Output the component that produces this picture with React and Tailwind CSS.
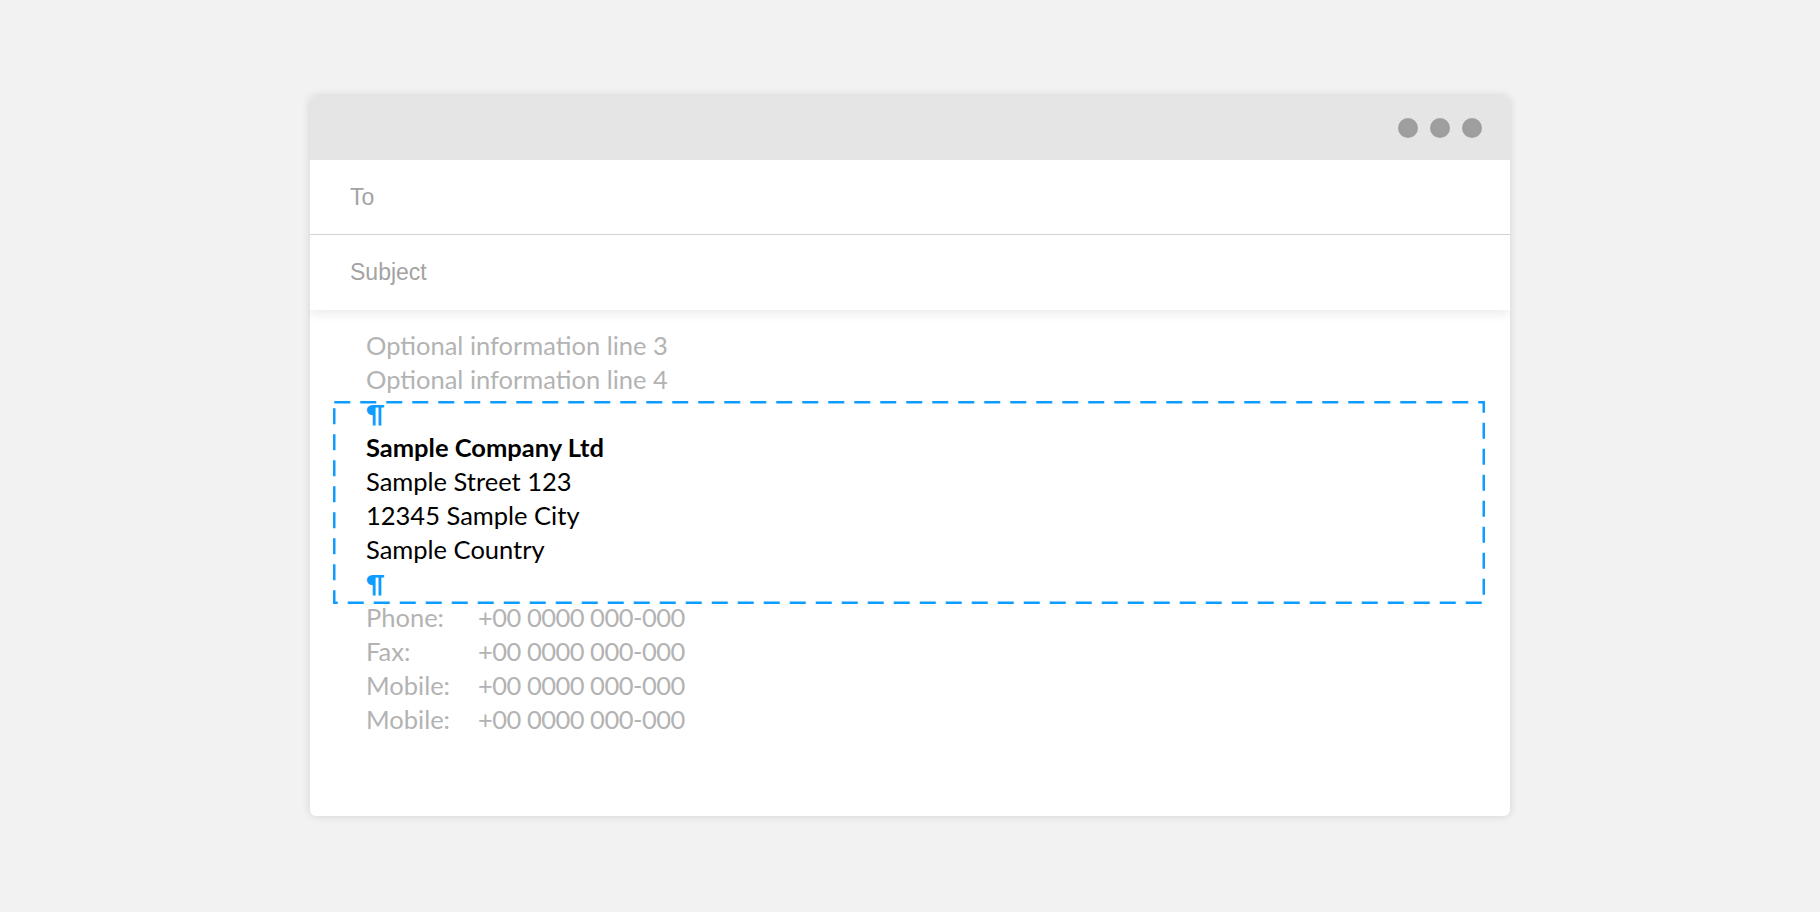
import React from "react";

const contacts = [
  { label: "Phone:", value: "+00 0000 000-000" },
  { label: "Fax:", value: "+00 0000 000-000" },
  { label: "Mobile:", value: "+00 0000 000-000" },
  { label: "Mobile:", value: "+00 0000 000-000" },
];

function Dot() {
  return <span className="block h-5 w-5 rounded-full bg-[#9e9e9e]" />;
}

function HeaderRow({ label, border }) {
  return (
    <div
      className={`flex h-[75px] items-center px-[40px] text-[23px] text-[#a3a3a3] ${border ? "border-b border-[#d2d2d2]" : ""}`}
      style={{ fontFamily: '"Liberation Sans", Arial, sans-serif' }}
    >
      {label}
    </div>
  );
}

export default function App() {
  return (
    <div className="flex h-[912px] w-full items-center justify-center bg-[#f2f2f2]">
      <div className="flex h-[720px] w-[1200px] flex-col overflow-hidden rounded-[6px] bg-white shadow-[0_0_10px_rgba(0,0,0,0.13)]">
        {/* header card */}
        <div className="relative z-10 shadow-[0_4px_10px_rgba(0,0,0,0.08)]">
          <div className="flex h-[64px] items-center justify-end gap-3 bg-[#e5e5e5] pr-[28px]">
            <Dot />
            <Dot />
            <Dot />
          </div>
          <HeaderRow label="To" border />
          <HeaderRow label="Subject" />
        </div>

        {/* body */}
        <div
          className="relative flex-1 pt-[18px] text-[25.5px] leading-[34px]"
          style={{ fontFamily: 'Lato, "Noto Sans", sans-serif' }}
        >
          <div className="pl-[56px] text-[#b3b3b3]">
            <div>Optional information line 3</div>
            <div>Optional information line 4</div>
          </div>

          <div className="relative">
            <svg
              className="pointer-events-none absolute left-[23px] top-[5px]"
              width="1152"
              height="203"
              viewBox="0 0 1152 203"
            >
              <rect
                x="1.25"
                y="1.25"
                width="1149.5"
                height="200.5"
                fill="none"
                stroke="#0d9cff"
                strokeWidth="2.5"
                strokeDasharray="16 10"
              />
            </svg>
            <div className="pl-[56px] text-black">
              <div className="font-bold text-[#0d9cff]">¶</div>
              <div className="font-bold">Sample Company Ltd</div>
              <div>Sample Street 123</div>
              <div>12345 Sample City</div>
              <div>Sample Country</div>
              <div className="font-bold text-[#0d9cff]">¶</div>
            </div>
          </div>

          <div className="pl-[56px] text-[#b3b3b3]">
            {contacts.map((c, i) => (
              <div key={i} className="flex">
                <span className="w-[112px]">{c.label}</span>
                <span className="tracking-[-0.5px]">{c.value}</span>
              </div>
            ))}
          </div>
        </div>
      </div>
    </div>
  );
}
